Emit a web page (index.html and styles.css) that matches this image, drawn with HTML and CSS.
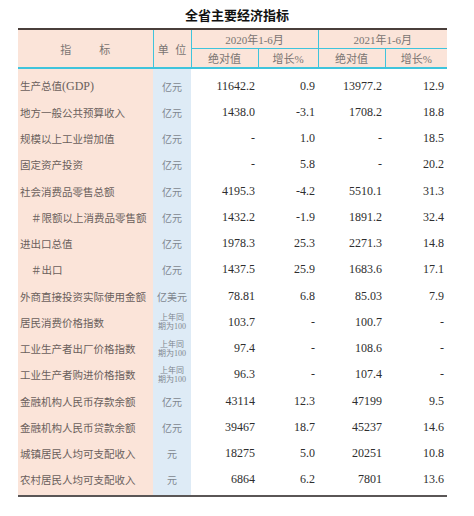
FILE: index.html
```html
<!DOCTYPE html>
<html lang="zh">
<head>
<meta charset="utf-8">
<link rel="stylesheet" href="styles.css">
</head>
<body>
<h1 class="title">全省主要经济指标</h1>
<table class="stats">
  <colgroup>
    <col class="c-name"><col class="c-unit"><col class="c-abs"><col class="c-pct"><col class="c-abs2"><col class="c-pct2">
  </colgroup>
  <thead>
    <tr class="h1">
      <th rowspan="2" class="h-name">指<span class="gap"></span>标</th>
      <th rowspan="2" class="h-unit">单 位</th>
      <th colspan="2" class="h-year">2020年1-6月</th>
      <th colspan="2" class="h-year">2021年1-6月</th>
    </tr>
    <tr class="h2">
      <th class="h-sub">绝对值</th>
      <th class="h-sub">增长%</th>
      <th class="h-sub">绝对值</th>
      <th class="h-sub">增长%</th>
    </tr>
  </thead>
  <tbody>
    <tr class="first"><td class="name">生产总值<span class="lat">(GDP)</span></td><td class="unit">亿元</td><td class="num">11642.2</td><td class="num">0.9</td><td class="num">13977.2</td><td class="num">12.9</td></tr>
    <tr><td class="name">地方一般公共预算收入</td><td class="unit">亿元</td><td class="num">1438.0</td><td class="num">-3.1</td><td class="num">1708.2</td><td class="num">18.8</td></tr>
    <tr><td class="name">规模以上工业增加值</td><td class="unit">亿元</td><td class="num">-</td><td class="num">1.0</td><td class="num">-</td><td class="num">18.5</td></tr>
    <tr><td class="name">固定资产投资</td><td class="unit">亿元</td><td class="num">-</td><td class="num">5.8</td><td class="num">-</td><td class="num">20.2</td></tr>
    <tr><td class="name">社会消费品零售总额</td><td class="unit">亿元</td><td class="num">4195.3</td><td class="num">-4.2</td><td class="num">5510.1</td><td class="num">31.3</td></tr>
    <tr><td class="name sub">＃限额以上消费品零售额</td><td class="unit">亿元</td><td class="num">1432.2</td><td class="num">-1.9</td><td class="num">1891.2</td><td class="num">32.4</td></tr>
    <tr><td class="name">进出口总值</td><td class="unit">亿元</td><td class="num">1978.3</td><td class="num">25.3</td><td class="num">2271.3</td><td class="num">14.8</td></tr>
    <tr><td class="name sub">＃出口</td><td class="unit">亿元</td><td class="num">1437.5</td><td class="num">25.9</td><td class="num">1683.6</td><td class="num">17.1</td></tr>
    <tr><td class="name">外商直接投资实际使用金额</td><td class="unit">亿美元</td><td class="num">78.81</td><td class="num">6.8</td><td class="num">85.03</td><td class="num">7.9</td></tr>
    <tr><td class="name">居民消费价格指数</td><td class="unit small">上年同<br>期为100</td><td class="num">103.7</td><td class="num">-</td><td class="num">100.7</td><td class="num">-</td></tr>
    <tr><td class="name">工业生产者出厂价格指数</td><td class="unit small">上年同<br>期为100</td><td class="num">97.4</td><td class="num">-</td><td class="num">108.6</td><td class="num">-</td></tr>
    <tr><td class="name">工业生产者购进价格指数</td><td class="unit small">上年同<br>期为100</td><td class="num">96.3</td><td class="num">-</td><td class="num">107.4</td><td class="num">-</td></tr>
    <tr><td class="name">金融机构人民币存款余额</td><td class="unit">亿元</td><td class="num">43114</td><td class="num">12.3</td><td class="num">47199</td><td class="num">9.5</td></tr>
    <tr><td class="name">金融机构人民币贷款余额</td><td class="unit">亿元</td><td class="num">39467</td><td class="num">18.7</td><td class="num">45237</td><td class="num">14.6</td></tr>
    <tr><td class="name">城镇居民人均可支配收入</td><td class="unit">元</td><td class="num">18275</td><td class="num">5.0</td><td class="num">20251</td><td class="num">10.8</td></tr>
    <tr class="last"><td class="name">农村居民人均可支配收入</td><td class="unit">元</td><td class="num">6864</td><td class="num">6.2</td><td class="num">7801</td><td class="num">13.6</td></tr>
  </tbody>
</table>
</body>
</html>
```

FILE: styles.css
```css
html, body {
  margin: 0;
  padding: 0;
  background: #ffffff;
}
body {
  font-family: "Liberation Serif", "Noto Sans CJK SC", serif;
  color: #333;
}
.title {
  margin: 0;
  padding-top: 6px;
  height: 22px;
  text-align: center;
  font-family: "Noto Sans CJK SC", sans-serif;
  font-size: 13px;
  font-weight: bold;
  line-height: 18px;
  color: #111;
}
.stats {
  margin-left: 18px;
  width: 429px;
  table-layout: fixed;
  border-collapse: collapse;
  border-top: 2px solid #4a3f3b;
  border-bottom: 2px solid #5a5656;
}
.c-name { width: 135px; }
.c-unit { width: 38px; }
.c-abs { width: 67px; }
.c-pct { width: 60px; }
.c-abs2 { width: 67px; }
.c-pct2 { width: 62px; }

.stats th {
  background: #fbe4d9;
  font-weight: normal;
  color: #7a7472;
  font-size: 11px;
  padding: 0;
  border: 1.5px solid #3fc4dc;
  border-top: none;
  font-family: "Liberation Serif", "Noto Sans CJK SC", serif;
}
.stats th:first-child { border-left: none; }
.stats tr.h1 th:last-child,
.stats tr.h2 th:last-child { border-right: none; }
.stats thead tr:last-child th,
.stats th[rowspan] { border-bottom: 2.5px solid #3fc4dc; }
.h1 th { height: 18px; }
.h2 th { height: 18px; }
.gap { display: inline-block; width: 28px; }
.h-unit { word-spacing: 4px; }

.stats td {
  padding: 0;
  height: 26.25px;
  font-size: 12px;
}
.stats tr.first td { padding-top: 4px; }
.stats tr.last td { padding-bottom: 2px; }
.stats td.name {
  background: #fbe4d9;
  font-family: "Noto Sans CJK SC", sans-serif;
  font-size: 10.5px;
  color: #6a5f5c;
  padding-left: 2px;
  white-space: nowrap;
}
.stats td.name .lat {
  font-family: "Liberation Serif", serif;
  font-size: 12px;
}
.stats td.name.sub { padding-left: 13px; }
.stats td.unit {
  background: #deebf6;
  text-align: center;
  font-family: "Noto Sans CJK SC", sans-serif;
  font-size: 10px;
  color: #7f8790;
}
.stats td.unit.small {
  font-family: "Liberation Serif", "Noto Sans CJK SC", serif;
  font-size: 8px;
  line-height: 9px;
}
.stats td.num {
  text-align: right;
  padding-right: 3px;
  color: #2e2e2e;
}
```
